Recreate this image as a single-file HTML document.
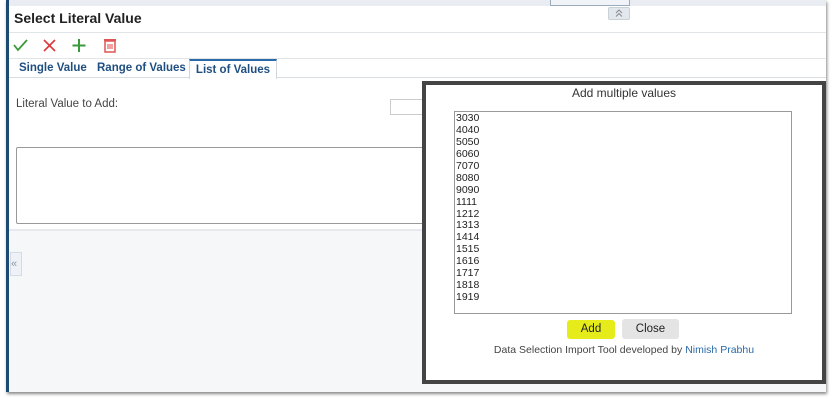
<!DOCTYPE html><html><head><style>
body{margin:0;width:837px;height:402px;background:#fff;font-family:"Liberation Sans",sans-serif;position:relative;overflow:hidden}
.a{position:absolute}
</style></head><body>
<div class="a" style="left:6px;top:0;width:820px;height:392px;background:#f5f7f9;box-shadow:1px 2px 3px #888"></div>
<div class="a" style="left:6px;top:0;width:3px;height:392px;background:#1d4a72"></div>
<div class="a" style="left:9px;top:0;width:817px;height:6px;background:#e9edf2"></div>
<div class="a" style="left:550px;top:0;width:78px;height:5px;border:1px solid #9ab;border-top:0;background:#f0f3f7"></div>
<div class="a" style="left:9px;top:6px;width:817px;height:223px;background:#fff;border-bottom:2px solid #e6e9ed"></div>
<div class="a" style="left:608px;top:7px;width:20px;height:11px;background:#e3e8ee;border:1px solid #c8d0d8;border-radius:2px"><svg width="20" height="11" style="display:block"><path d="M7 5l3-3 3 3M7 8.5l3-3 3 3" stroke="#889" stroke-width="1" fill="none"/></svg></div>
<div class="a" style="left:14px;top:10px;font-size:14px;font-weight:bold;color:#222">Select Literal Value</div>
<div class="a" style="left:9px;top:32px;width:817px;height:1px;background:#e2e5e8"></div>
<svg class="a" style="left:12px;top:37px" width="110" height="16"><path d="M2 8l4 5 9-10" stroke="#3a9a3a" stroke-width="1.8" fill="none"/><path d="M32 3l11 11M43 3l-11 11" stroke="#d9393a" stroke-width="1.6"/><path d="M67 2v13M60.5 8.5h13" stroke="#3a9a3a" stroke-width="2"/><rect x="93" y="4" width="10" height="11" fill="none" stroke="#e05555" stroke-width="1.5"/><rect x="92" y="2" width="12" height="2" fill="#e05555"/><rect x="95" y="7" width="6" height="5" fill="#f4a0a0"/></svg>
<div class="a" style="left:9px;top:58px;width:817px;height:1px;background:#e2e5e8"></div>
<div class="a" style="left:9px;top:77px;width:817px;height:1px;background:#d8dde2"></div>
<div class="a" style="left:19px;top:62px;font-size:11.5px;font-weight:bold;color:#1f4f80">Single Value</div>
<div class="a" style="left:97px;top:62px;font-size:11.5px;font-weight:bold;color:#1f4f80">Range of Values</div>
<div class="a" style="left:189px;top:59px;width:86px;height:18px;border:1px solid #d0d6dc;border-top:2px solid #2a6aa8;border-bottom:0;background:#fff;font-size:11.5px;font-weight:bold;color:#1f4f80;text-align:center;line-height:19px">List of Values</div>
<div class="a" style="left:16px;top:98px;font-size:11.5px;color:#444">Literal Value to Add:</div>
<div class="a" style="left:390px;top:99px;width:40px;height:14px;border:1px solid #ccc"></div>
<div class="a" style="left:16px;top:147px;width:420px;height:75px;border:1px solid #999;border-radius:2px"></div>
<div class="a" style="left:10px;top:252px;width:10px;height:22px;background:#eef2f6;border:1px solid #d4dbe2;font-size:11px;color:#89a;line-height:22px">«</div>
<div class="a" style="left:422px;top:81px;width:396px;height:295px;border:4px solid #444;background:#fff"></div>
<div class="a" style="left:426px;top:86px;width:396px;text-align:center;font-size:12px;color:#333">Add multiple values</div>
<div class="a" style="left:454px;top:111px;width:334px;height:199px;border:1px solid #999;padding:1px 1px;font-size:10.5px;line-height:11.93px;color:#222">3030<br>4040<br>5050<br>6060<br>7070<br>8080<br>9090<br>1111<br>1212<br>1313<br>1414<br>1515<br>1616<br>1717<br>1818<br>1919</div>
<div class="a" style="left:567px;top:320px;width:48px;height:19px;background:#e6ec1a;border-radius:3px;text-align:center;line-height:19px;font-size:11.5px;color:#222">Add</div>
<div class="a" style="left:622px;top:319px;width:57px;height:20px;background:#e4e4e4;border-radius:3px;text-align:center;line-height:20px;font-size:11.5px;color:#222">Close</div>
<div class="a" style="left:426px;top:344px;width:396px;text-align:center;font-size:10.5px;color:#444">Data Selection Import Tool developed by <span style="color:#2a6aa8">Nimish Prabhu</span></div>
</body></html>
